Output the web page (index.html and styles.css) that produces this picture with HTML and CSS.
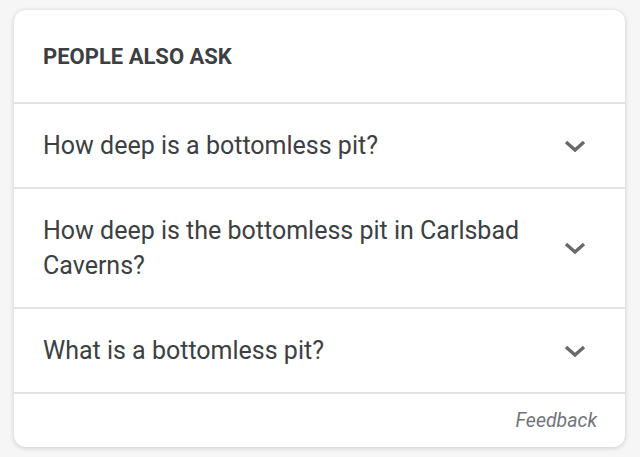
FILE: index.html
```html
<!DOCTYPE html>
<html>
<head>
<meta charset="utf-8">
<link rel="stylesheet" href="styles.css">
</head>
<body>
<div class="card">
  <div class="header">PEOPLE ALSO ASK</div>
  <div class="row">
    <div class="q">How deep is a bottomless pit?</div>
    <svg class="chev" viewBox="0 0 22 12" width="22" height="12"><polyline points="2,2 11,10 20,2" fill="none" stroke="#666a6e" stroke-width="3.4"/></svg>
  </div>
  <div class="row">
    <div class="q">How deep is the bottomless pit in Carlsbad Caverns?</div>
    <svg class="chev" viewBox="0 0 22 12" width="22" height="12"><polyline points="2,2 11,10 20,2" fill="none" stroke="#666a6e" stroke-width="3.4"/></svg>
  </div>
  <div class="row">
    <div class="q">What is a bottomless pit?</div>
    <svg class="chev" viewBox="0 0 22 12" width="22" height="12"><polyline points="2,2 11,10 20,2" fill="none" stroke="#666a6e" stroke-width="3.4"/></svg>
  </div>
  <div class="footer"><span class="feedback">Feedback</span></div>
</div>
</body>
</html>
```

FILE: styles.css
```css
html, body {
  margin: 0;
  padding: 0;
  background: #f6f6f6;
}
body {
  padding: 10px 15px 10px 14px;
  font-family: Roboto, "Liberation Sans", Arial, sans-serif;
}
.card {
  width: 611px;
  height: 437px;
  box-sizing: border-box;
  background: #fff;
  border-radius: 12px;
  box-shadow: 0 1px 5px rgba(0,0,0,0.18);
  display: flex;
  flex-direction: column;
  overflow: hidden;
}
.header {
  height: 94px;
  flex: none;
  box-sizing: border-box;
  display: flex;
  align-items: center;
  padding-left: 29px;
  font-size: 22px;
  font-weight: 700;
  color: #3c4043;
  border-bottom: 2px solid #e3e3e3;
}
.row {
  flex: none;
  display: flex;
  align-items: center;
  padding: 24px 39px 24px 29px;
  border-bottom: 2px solid #e3e3e3;
}
.q {
  flex: 1;
  font-size: 25px;
  line-height: 35px;
  color: #3c4043;
  padding-right: 40px;
}
.chev {
  flex: none;
  display: block;
}
.footer {
  flex: 1;
  display: flex;
  align-items: center;
  justify-content: flex-end;
  padding-right: 28px;
}
.feedback {
  font-size: 19.5px;
  font-style: italic;
  color: #70757a;
}
```
